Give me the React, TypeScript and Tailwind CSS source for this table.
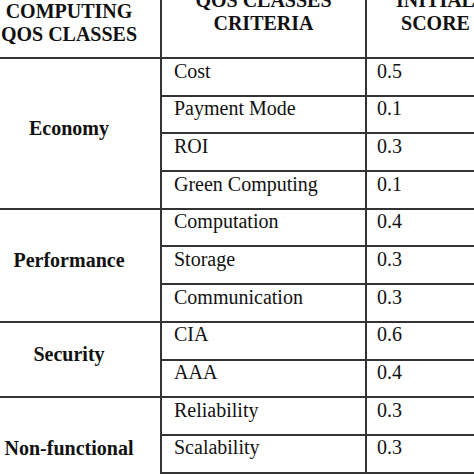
const groups = [
  {
    name: "Economy",
    items: [
      ["Cost", "0.5"],
      ["Payment Mode", "0.1"],
      ["ROI", "0.3"],
      ["Green Computing", "0.1"],
    ],
  },
  {
    name: "Performance",
    items: [
      ["Computation", "0.4"],
      ["Storage", "0.3"],
      ["Communication", "0.3"],
    ],
  },
  {
    name: "Security",
    items: [
      ["CIA", "0.6"],
      ["AAA", "0.4"],
    ],
  },
  {
    name: "Non-functional",
    items: [
      ["Reliability", "0.3"],
      ["Scalability", "0.3"],
      ["Availability", "0.3"],
    ],
  },
];

const cell = "border-2 border-[#333]";

export default function App() {
  return (
    <div className="w-[474px] h-[474px] overflow-hidden bg-white text-[#111] font-['Liberation_Serif',serif] text-[20px] leading-[22.5px]">
      <table className="-ml-[24px] -mt-[38px] border-collapse table-fixed w-[528px]">
        <colgroup>
          <col className="w-[184px]" />
          <col className="w-[205px]" />
          <col className="w-[139px]" />
        </colgroup>
        <thead>
          <tr className="h-[95px]">
            <th className={`${cell} align-middle text-center font-bold leading-[23px] pt-[2px]`}>
              CLOUD
              <br />
              COMPUTING
              <br />
              QOS CLASSES
            </th>
            <th className={`${cell} align-middle text-center font-bold leading-[23px] pt-[2px]`}>
              QOS CLASSES
              <br />
              CRITERIA
            </th>
            <th className={`${cell} align-middle text-center font-bold leading-[23px] pt-[2px]`}>
              INITIAL
              <br />
              SCORE
            </th>
          </tr>
        </thead>
        <tbody>
          {groups.map((g) =>
            g.items.map((item, i) => (
              <tr key={g.name + item[0]} className="h-[37.7px]">
                {i === 0 && (
                  <td
                    rowSpan={g.items.length}
                    className={`${cell} align-middle text-center font-bold pb-[11px]`}
                  >
                    {g.name}
                  </td>
                )}
                <td
                  className={`${cell} align-middle pl-[12px] pb-[12px] ${
                    item[0] === "Availability" ? "bg-[#bdbdbd]" : ""
                  }`}
                >
                  {item[0]}
                </td>
                <td
                  className={`${cell} align-middle pl-[10px] pb-[12px] ${
                    item[0] === "Availability" ? "bg-[#bdbdbd]" : ""
                  }`}
                >
                  {item[1]}
                </td>
              </tr>
            ))
          )}
        </tbody>
      </table>
    </div>
  );
}
